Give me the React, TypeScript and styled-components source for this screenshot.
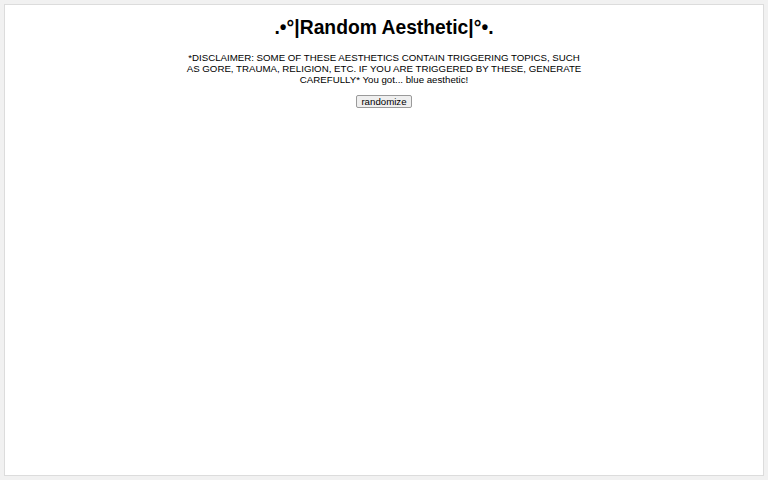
import styled, { createGlobalStyle } from "styled-components";

const GlobalStyle = createGlobalStyle`
	html, body {
		margin: 0;
		padding: 0;
		height: 100%;
		background-color: #f1f1f1;
	}
	#root {
		height: 100%;
		padding: 4px;
		box-sizing: border-box;
	}
`;

const Page = styled.div`
	height: 100%;
	box-sizing: border-box;
	background-color: #ffffff;
	border: 1px solid #dcdcdc;
	display: flex;
	flex-direction: column;
	align-items: center;
	font-family: "Liberation Sans", Arial, sans-serif;
	color: #000;
`;

const Title = styled.h1`
	font-size: 19.3px;
	line-height: 22px;
	font-weight: bold;
	margin: 12px 0 0;
`;

const Disclaimer = styled.p`
	width: 400px;
	font-size: 9.7px;
	line-height: 11px;
	text-align: center;
	margin: 13px 0 0;
`;

const RandomizeBtn = styled.button`
	font-family: "Liberation Sans", Arial, sans-serif;
	font-size: 9.7px;
	height: 13px;
	line-height: 11px;
	margin-top: 10px;
	padding: 0 4px;
	background-color: #efefef;
	border: 1px solid #9a9a9a;
	border-radius: 2px;
	color: #000;
`;

function App() {
	return (
		<>
			<GlobalStyle />
			<Page>
				<Title>.•°|Random Aesthetic|°•.</Title>
				<Disclaimer>
					*DISCLAIMER: SOME OF THESE AESTHETICS CONTAIN TRIGGERING TOPICS, SUCH AS GORE,
					TRAUMA, RELIGION, ETC. IF YOU ARE TRIGGERED BY THESE, GENERATE CAREFULLY* You
					got... blue aesthetic!
				</Disclaimer>
				<RandomizeBtn>randomize</RandomizeBtn>
			</Page>
		</>
	);
}

export default App;
